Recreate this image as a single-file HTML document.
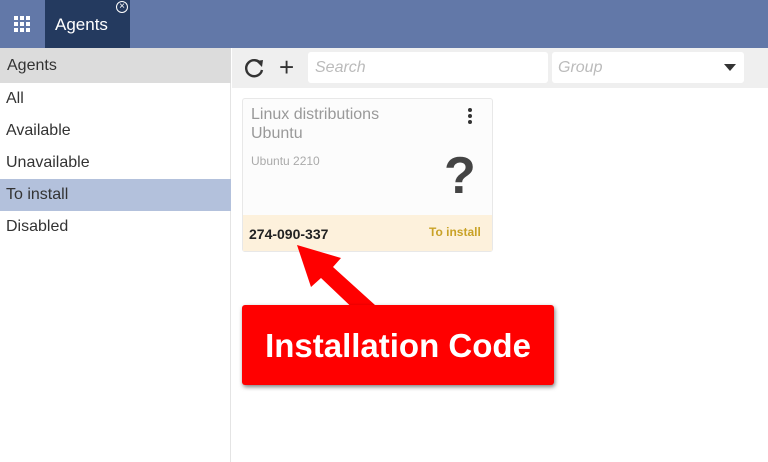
<!DOCTYPE html><html><head><style>
*{margin:0;padding:0;box-sizing:border-box}
body{width:768px;height:462px;overflow:hidden;background:#fff;font-family:"Liberation Sans",sans-serif;position:relative}
.a{position:absolute}
</style></head><body>
<div class="a" style="left:0;top:0;width:768px;height:48px;background:#6278a8"></div>
<div class="a" style="left:45px;top:0;width:85px;height:48px;background:#243a5f"></div>
<div class="a" style="left:55px;top:15px;color:#fff;font-size:17px">Agents</div>
<div class="a" style="left:116px;top:1px;width:12px;height:12px;border:1.5px solid #fff;border-radius:50%;color:#fff;font-size:10px;line-height:9px;text-align:center">×</div>
<svg class="a" style="left:14px;top:16px" width="17" height="17"><g fill="#fff"><rect x="0" y="0" width="4" height="4"/><rect x="6" y="0" width="4" height="4"/><rect x="12" y="0" width="4" height="4"/><rect x="0" y="6" width="4" height="4"/><rect x="6" y="6" width="4" height="4"/><rect x="12" y="6" width="4" height="4"/><rect x="0" y="12" width="4" height="4"/><rect x="6" y="12" width="4" height="4"/><rect x="12" y="12" width="4" height="4"/></g></svg>
<div class="a" style="left:0;top:48px;width:231px;height:414px;background:#fff;border-right:1px solid #e4e4e4"></div>
<div class="a" style="left:0;top:48px;width:231px;height:35px;background:#dcdcdc"></div>
<div class="a" style="left:7px;top:57px;font-size:16px;color:#333">Agents</div>
<div class="a" style="left:0;top:179px;width:231px;height:32px;background:#b3c1dc"></div>
<div class="a" style="left:6px;top:83px;font-size:16px;color:#333;line-height:32px">All<br>Available<br>Unavailable<br>To install<br>Disabled</div>
<div class="a" style="left:232px;top:48px;width:536px;height:40px;background:#efefef"></div>
<svg class="a" style="left:244px;top:57px" width="22" height="22" viewBox="0 0 22 22"><path d="M17 7A8 8 0 1 0 18 13" fill="none" stroke="#333" stroke-width="2.4"/><path d="M12 4L19 3L18 10Z" fill="#333"/></svg>
<div class="a" style="left:279px;top:54px;font-size:26px;color:#333;line-height:26px">+</div>
<div class="a" style="left:308px;top:52px;width:240px;height:31px;background:#fff;border-radius:3px"></div>
<div class="a" style="left:315px;top:59px;font-size:16px;color:#bbb;font-style:italic">Search</div>
<div class="a" style="left:552px;top:52px;width:192px;height:31px;background:#fff;border-radius:3px"></div>
<div class="a" style="left:558px;top:59px;font-size:16px;color:#bbb;font-style:italic">Group</div>
<svg class="a" style="left:724px;top:64px" width="12" height="8"><path d="M0 0H12L6 7Z" fill="#333"/></svg>
<div class="a" style="left:242px;top:98px;width:251px;height:154px;background:#fcfcfc;border:1px solid #e8e8e8;border-radius:3px"></div>
<div class="a" style="left:243px;top:215px;width:249px;height:36px;background:#fdf1dc"></div>
<div class="a" style="left:251px;top:105px;font-size:16px;color:#999;line-height:19px">Linux distributions<br>Ubuntu</div>
<div class="a" style="left:251px;top:154px;font-size:12px;color:#aaa">Ubuntu 2210</div>
<div class="a" style="left:468px;top:108px;width:4px;height:4px;background:#333;border-radius:2px;box-shadow:0 6px #333,0 12px #333"></div>
<div class="a" style="left:444px;top:150px;font-size:52px;font-weight:bold;color:#444;line-height:52px">?</div>
<div class="a" style="left:249px;top:226px;font-size:14px;font-weight:bold;color:#222">274-090-337</div>
<div class="a" style="left:429px;top:225px;font-size:12px;font-weight:bold;color:#c9a227">To install</div>
<svg class="a" style="left:0;top:0" width="768" height="462"><polygon points="297,245 341,258 333,267 375,305 361,316 321,278 311,287" fill="#f00"/></svg>
<div class="a" style="left:242px;top:305px;width:312px;height:80px;background:#f00;border-radius:3px;box-shadow:1px 2px 4px rgba(0,0,0,.5)"></div>
<div class="a" style="left:242px;top:327px;width:312px;text-align:center;font-size:33px;font-weight:bold;color:#fff">Installation Code</div>
</body></html>
